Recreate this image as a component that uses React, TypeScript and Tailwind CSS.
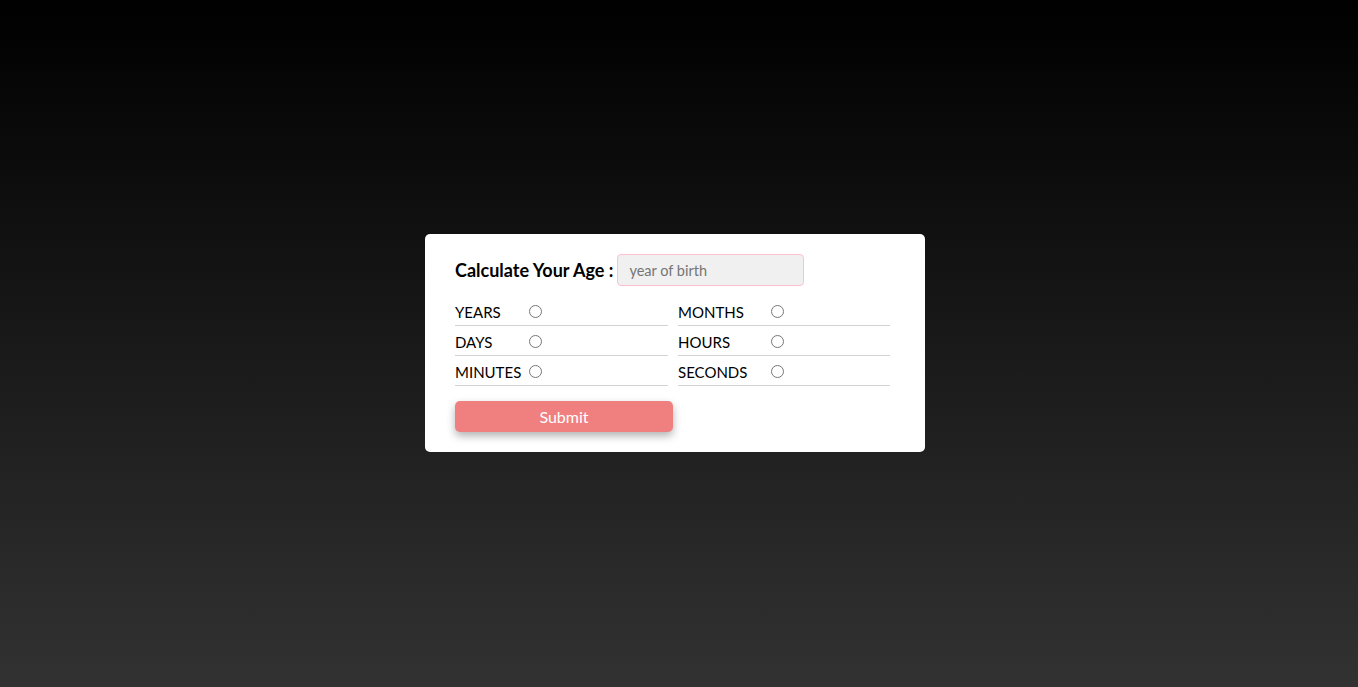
import React from 'react';

const units = [
  ['YEARS', 'MONTHS'],
  ['DAYS', 'HOURS'],
  ['MINUTES', 'SECONDS'],
];

export default function App() {
  return (
    <div
      className="flex min-h-screen items-center justify-center bg-linear-to-b/srgb from-[#000000] to-[#323232] pr-2 pb-px"
      style={{ fontFamily: 'Lato, "Open Sans", sans-serif' }}
    >
      <div className="w-[500px] rounded-[5px] bg-white px-[30px] pb-[20px] pt-[20px] text-black">
        <div className="flex items-center">
          <label className="text-[18px] font-bold">Calculate Your Age :</label>
          <input
            type="text"
            placeholder="year of birth"
            className="ml-[4px] h-[32px] w-[187px] rounded-[4px] border border-[#ffc0cb] bg-[#f0f0f0] px-[11px] text-[14.5px] outline-none placeholder:text-[#757575]"
          />
        </div>
        <div className="mt-[10px] grid grid-cols-[213px_212px] gap-x-[10px]">
          {units.map((row) =>
            row.map((name, i) => (
              <div
                key={name}
                className="flex h-[30px] items-center border-b border-[#d3d3d3] pt-[3px]"
              >
                <span className={i === 0 ? 'w-[74px] text-[15px]' : 'w-[93px] text-[15px]'}>
                  {name}
                </span>
                <input
                  type="radio"
                  name="unit"
                  className="h-[13px] w-[13px] -translate-y-px"
                />
              </div>
            ))
          )}
        </div>
        <button className="mt-[15px] h-[31px] w-[218px] rounded-[5px] bg-[#f08080] text-[16px] text-white shadow-[0_4px_8px_rgba(0,0,0,0.3)]">
          Submit
        </button>
      </div>
    </div>
  );
}
